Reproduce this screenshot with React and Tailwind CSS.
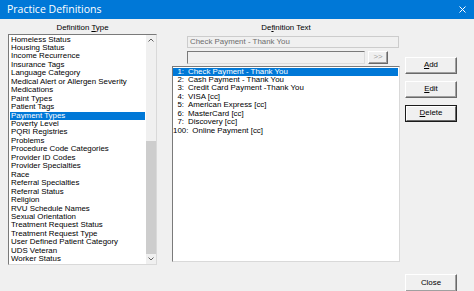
import React from "react";

const leftItems = [
  "Homeless Status",
  "Housing Status",
  "Income Recurrence",
  "Insurance Tags",
  "Language Category",
  "Medical Alert or Allergen Severity",
  "Medications",
  "Paint Types",
  "Patient Tags",
  "Payment Types",
  "Poverty Level",
  "PQRI Registries",
  "Problems",
  "Procedure Code Categories",
  "Provider ID Codes",
  "Provider Specialties",
  "Race",
  "Referral Specialties",
  "Referral Status",
  "Religion",
  "RVU Schedule Names",
  "Sexual Orientation",
  "Treatment Request Status",
  "Treatment Request Type",
  "User Defined Patient Category",
  "UDS Veteran",
  "Worker Status",
];

const rightItems = [
  ["1:", "Check Payment - Thank You"],
  ["2:", "Cash Payment - Thank You"],
  ["3:", "Credit Card Payment -Thank You"],
  ["4:", "VISA [cc]"],
  ["5:", "American Express [cc]"],
  ["6:", "MasterCard [cc]"],
  ["7:", "Discovery [cc]"],
  ["100:", "Online Payment [cc]"],
];

function Btn({ children }) {
  return (
    <div className="w-[52px] h-[17px] flex items-center justify-center bg-[#f0f0f0] border border-t-white border-l-white border-r-[#696969] border-b-[#696969] shadow-[inset_-1px_-1px_0_#a0a0a0] text-black">
      {children}
    </div>
  );
}

export default function App() {
  return (
    <div className="w-[474px] h-[291px] overflow-hidden bg-[#f0f0f0] flex flex-col font-['Liberation_Sans',Arial,sans-serif] text-[7.9px] leading-[8.46px] text-black">
      <div className="h-[19px] shrink-0 bg-[#0078d7] flex items-center justify-between pl-[7px] pr-[8px]">
        <span className="text-white text-[10.5px] leading-none font-['Open_Sans',sans-serif]">
          Practice Definitions
        </span>
        <svg width="7" height="7" viewBox="0 0 7 7">
          <path d="M0.5 0.5L6.5 6.5M6.5 0.5L0.5 6.5" stroke="white" strokeWidth="1" />
        </svg>
      </div>

      <div className="flex pt-[4px]">
        {/* left column */}
        <div className="ml-[8px] w-[149px] flex flex-col">
          <div className="h-[11px] flex items-center justify-center">
            <span>
              Definition <u className="underline-offset-1">T</u>ype
            </span>
          </div>
          <div className="h-[231px] flex bg-white border border-t-[#7a7a7a] border-l-[#7a7a7a] border-r-[#d9d9d9] border-b-[#d9d9d9]">
            <div className="flex-1 flex flex-col pt-[0.5px] overflow-hidden">
              {leftItems.map((t) => (
                <div
                  key={t}
                  className={
                    t === "Payment Types"
                      ? "h-[8.46px] shrink-0 mx-[1px] pl-[1px] whitespace-nowrap bg-[#0078d7] text-white"
                      : "h-[8.46px] shrink-0 mx-[1px] pl-[1px] whitespace-nowrap"
                  }
                >
                  {t}
                </div>
              ))}
            </div>
            <div className="w-[10px] flex flex-col bg-[#f0f0f0]">
              <div className="h-[10px] flex items-center justify-center">
                <svg width="6" height="4" viewBox="0 0 6 4">
                  <polyline points="0.5,3.5 3,1 5.5,3.5" fill="none" stroke="#606060" strokeWidth="1" />
                </svg>
              </div>
              <div className="flex-1 flex flex-col justify-end">
                <div className="h-[113px] bg-[#cdcdcd]" />
              </div>
              <div className="h-[10px] flex items-center justify-center">
                <svg width="6" height="4" viewBox="0 0 6 4">
                  <polyline points="0.5,0.5 3,3 5.5,0.5" fill="none" stroke="#606060" strokeWidth="1" />
                </svg>
              </div>
            </div>
          </div>
        </div>

        {/* middle column */}
        <div className="ml-[15px] w-[228px] flex flex-col">
          <div className="h-[11px] flex items-center justify-center">
            <span>
              De<u className="underline-offset-1">f</u>inition Text
            </span>
          </div>
          <div className="mt-[2px] ml-[15px] w-[212px] h-[12px] border border-[#cccccc] bg-[#f0f0f0] text-[#6d6d6d] pl-[2px] leading-[10px] whitespace-nowrap">
            Check Payment - Thank You
          </div>
          <div className="mt-[3px] ml-[15px] flex">
            <div className="w-[178px] h-[13px] bg-[#f0f0f0] border border-t-[#7a7a7a] border-l-[#7a7a7a] border-r-[#dcdcdc] border-b-[#dcdcdc]" />
            <div className="ml-[3px] w-[20px] h-[13px] flex items-center justify-center bg-[#f0f0f0] border border-t-white border-l-white border-r-[#696969] border-b-[#696969] shadow-[inset_-1px_-1px_0_#a0a0a0] text-[#a0a0a0]">
              &gt;&gt;
            </div>
          </div>
          <div className="mt-[2px] h-[196px] flex flex-col pt-[0.5px] bg-white border border-t-[#7a7a7a] border-l-[#7a7a7a] border-r-[#d9d9d9] border-b-[#d9d9d9]">
            {rightItems.map(([n, t], i) => (
              <div
                key={n}
                className={
                  i === 0
                    ? "h-[8.46px] shrink-0 mr-[1px] flex whitespace-nowrap bg-[#0078d7] text-white"
                    : "h-[8.46px] shrink-0 mr-[1px] flex whitespace-nowrap"
                }
              >
                <span className="min-w-[11px] text-right">{n}</span>
                <span className="ml-[4px]">{t}</span>
              </div>
            ))}
          </div>
        </div>

        {/* right column */}
        <div className="ml-[5px] w-[52px] flex flex-col">
          <div className="mt-[34px]">
            <Btn>
              <span>
                <u className="underline-offset-1">A</u>dd
              </span>
            </Btn>
          </div>
          <div className="mt-[7px]">
            <Btn>
              <span>
                <u className="underline-offset-1">E</u>dit
              </span>
            </Btn>
          </div>
          <div className="mt-[7px] w-[52px] h-[17px] border border-[#1a1a1a]">
            <div className="w-full h-full flex items-center justify-center bg-[#f0f0f0] border border-t-white border-l-white border-r-[#696969] border-b-[#696969]">
              <span>
                <u className="underline-offset-1">D</u>elete
              </span>
            </div>
          </div>
        </div>
      </div>

      <div className="mt-[9px] flex justify-end pr-[17px]">
        <div className="w-[52px] h-[18px] flex items-center justify-center bg-[#f0f0f0] border border-t-white border-l-white border-r-[#696969] border-b-[#696969] shadow-[inset_-1px_-1px_0_#a0a0a0]">
          Close
        </div>
      </div>
    </div>
  );
}
